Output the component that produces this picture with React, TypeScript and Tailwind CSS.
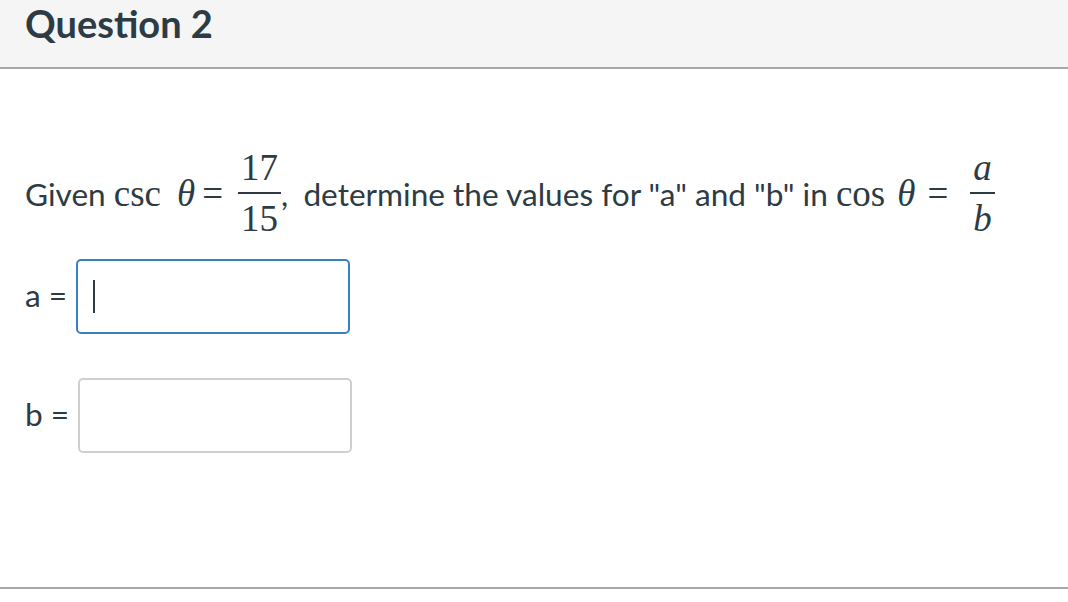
import React from 'react'

const textFont = "font-['Lato','Noto_Sans',sans-serif]"
const mathFont = "font-['Liberation_Serif','DejaVu_Serif',serif]"

// fraction typeset like display-style math; baseline = denominator baseline
function Frac({ top, bottom, italic }: { top: string; bottom: string; italic?: boolean }) {
  return (
    <span className={`inline-block align-[-25px] text-center ${mathFont} text-[37px] ${italic ? 'italic' : ''}`}>
      <span className="block leading-none px-[3px]">{top}</span>
      <span className="block h-[1.5px] bg-[#2d3b45] my-[6px]" />
      <span className="block leading-none px-[3px]">{bottom}</span>
    </span>
  )
}

function Trig({ fn, gap, eq }: { fn: string; gap: string; eq: string }) {
  return (
    <span className={`${mathFont} text-[37px]`}>
      <span>{fn}</span>
      <i className={`inline-block ${gap}`}>θ</i>
      <span className={`inline-block ${eq}`}>=</span>
    </span>
  )
}

function Field({ label, focused }: { label: string; focused?: boolean }) {
  return (
    <div className="flex items-center">
      <span className="text-[31.6px] mr-[9px]">{label} =</span>
      <div
        className={`w-[274px] h-[75px] rounded-[5px] bg-white flex items-center px-[15px] ${
          focused ? 'border-2 border-[#3b7fc2]' : 'border-2 border-[#cfcfcf]'
        }`}
      >
        {focused && <span className="block w-[2px] h-[33px] bg-[#2d3b45]" />}
      </div>
    </div>
  )
}

export default function App() {
  return (
    <div className={`w-[1068px] h-[602px] bg-white text-[#2d3b45] ${textFont}`}>
      {/* header */}
      <div className="h-[69px] bg-[#f5f5f5] border-b-2 border-[#a8a8a8] px-[25px]">
        <h2 className="text-[38px] font-bold leading-[46px]">Question 2</h2>
      </div>

      {/* body */}
      <div className="h-[520px] border-b-2 border-[#a8a8a8] px-[25px]">
        <div className="pt-[80px] text-[31.6px] leading-[40px] whitespace-nowrap">
          Given <Trig fn="csc" gap="ml-[16px]" eq="ml-[7px] mr-[15px]" />
          <Frac top="17" bottom="15" />,{' '}
          <span className="ml-[7px]">determine the values for "a" and "b" in</span>{' '}
          <Trig fn="cos" gap="ml-[12px]" eq="ml-[12px] mr-[22px]" />
          <Frac top="a" bottom="b" italic />
        </div>

        <div className="mt-[22px]">
          <Field label="a" focused />
        </div>
        <div className="mt-[44px]">
          <Field label="b" />
        </div>
      </div>
    </div>
  )
}
